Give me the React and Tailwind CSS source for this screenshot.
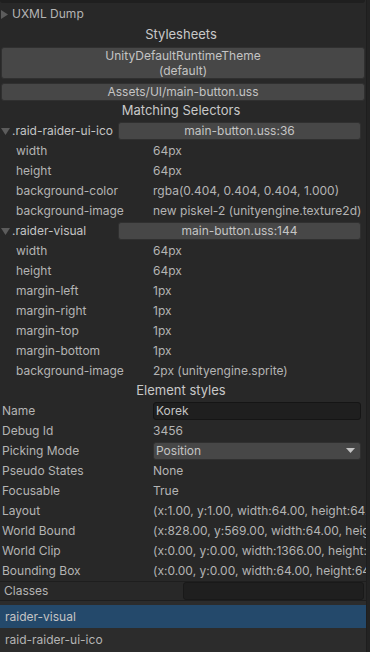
import React from 'react';

const font = { fontFamily: 'Inter, "Noto Sans", sans-serif' };

function Caret({ open }) {
  return (
    <svg width="9" height="9" viewBox="0 0 9 9" className="shrink-0">
      {open ? <path d="M0 1 L9 1 L4.5 8 Z" fill="#5c5c5c" /> : <path d="M1 0 L8 4.5 L1 9 Z" fill="#5c5c5c" />}
    </svg>
  );
}

function Header({ children }) {
  return <div className="h-5 flex items-center justify-center text-[13px] text-[#c8c8c8] pr-1">{children}</div>;
}

function PropRow({ name, value }) {
  return (
    <div className="h-5 flex items-center text-[12px] text-[#b4b4b4] whitespace-nowrap overflow-hidden">
      <div className="w-[153px] pl-4 shrink-0">{name}</div>
      <div className="overflow-hidden">{value}</div>
    </div>
  );
}

function Selector({ name, file, props }) {
  return (
    <div>
      <div className="h-5 flex items-center text-[12px] text-[#c4c4c4]">
        <div className="w-[118px] flex items-center gap-[2px] pl-[1px] shrink-0">
          <Caret open />
          <span className="whitespace-nowrap">{name}</span>
        </div>
        <div className="flex-1 h-[18px] mr-[5px] rounded-[3px] bg-[#474747] border border-[#303030] flex items-center justify-center text-[#c4c4c4]">
          {file}
        </div>
      </div>
      {props.map(p => <PropRow key={p[0]} name={p[0]} value={p[1]} />)}
    </div>
  );
}

function InfoRow({ name, children }) {
  return (
    <div className="h-5 flex items-center text-[12px] text-[#b4b4b4] whitespace-nowrap overflow-hidden">
      <div className="w-[153px] pl-[2px] shrink-0">{name}</div>
      <div className="flex-1 min-w-0 overflow-hidden">{children}</div>
    </div>
  );
}

export default function App() {
  return (
    <div className="w-[370px] h-[652px] bg-[#282828] overflow-hidden flex" style={font}>
      <div className="flex-1 min-w-0 flex flex-col">
        <div className="h-[3px] mr-[1px] bg-[#1f1f1f] rounded-b-sm" />
        <div className="h-[22px] flex items-center gap-[3px] text-[12px] text-[#b4b4b4]">
          <Caret />
          <span>UXML Dump</span>
        </div>
        <Header>Stylesheets</Header>
        <div className="mt-[2px] mx-[1px] h-[32px] rounded-[3px] bg-[#474747] border border-[#303030] flex flex-col items-center justify-center text-[12px] leading-[15px] text-[#c4c4c4]">
          <span>UnityDefaultRuntimeTheme</span>
          <span>(default)</span>
        </div>
        <div className="mt-[4px] mx-[1px] h-[18px] rounded-[3px] bg-[#474747] border border-[#303030] flex items-center justify-center text-[12px] text-[#c4c4c4]">
          Assets/UI/main-button.uss
        </div>
        <Header>Matching Selectors</Header>
        <Selector
          name=".raid-raider-ui-ico"
          file="main-button.uss:36"
          props={[
            ['width', '64px'],
            ['height', '64px'],
            ['background-color', 'rgba(0.404, 0.404, 0.404, 1.000)'],
            ['background-image', 'new piskel-2 (unityengine.texture2d)'],
          ]}
        />
        <Selector
          name=".raider-visual"
          file="main-button.uss:144"
          props={[
            ['width', '64px'],
            ['height', '64px'],
            ['margin-left', '1px'],
            ['margin-right', '1px'],
            ['margin-top', '1px'],
            ['margin-bottom', '1px'],
            ['background-image', '2px (unityengine.sprite)'],
          ]}
        />
        <Header>Element styles</Header>
        <InfoRow name="Name">
          <div className="h-[18px] mr-[5px] rounded-[3px] bg-[#1f1f1f] border border-[#151515] flex items-center px-[2px] text-[#c4c4c4]">Korek</div>
        </InfoRow>
        <InfoRow name="Debug Id">3456</InfoRow>
        <InfoRow name="Picking Mode">
          <div className="h-[18px] mr-[5px] rounded-[3px] bg-[#474747] border border-[#303030] flex items-center justify-between px-[2px] text-[#c4c4c4]">
            <span>Position</span>
            <svg width="9" height="6" viewBox="0 0 9 6" className="mr-[3px]"><path d="M0 0 L9 0 L4.5 5 Z" fill="#c4c4c4" /></svg>
          </div>
        </InfoRow>
        <InfoRow name="Pseudo States">None</InfoRow>
        <InfoRow name="Focusable">True</InfoRow>
        <InfoRow name="Layout">(x:1.00, y:1.00, width:64.00, height:64.00)</InfoRow>
        <InfoRow name="World Bound">(x:828.00, y:569.00, width:64.00, height:64.00)</InfoRow>
        <InfoRow name="World Clip">(x:0.00, y:0.00, width:1366.00, height:768.00)</InfoRow>
        <InfoRow name="Bounding Box">(x:0.00, y:0.00, width:64.00, height:64.00)</InfoRow>
        <div className="h-[20px] border-y border-[#1e1e1e] flex items-center text-[12px] text-[#b4b4b4]">
          <div className="w-[183px] pl-[4px] shrink-0">Classes</div>
          <div className="flex-1 h-[18px] mr-[2px] rounded-[3px] bg-[#1f1f1f] border border-[#191919]" />
        </div>
        <div className="flex-1 bg-[#2c2c2c] pt-[4px]">
          <div className="h-[23px] bg-[#24496b] flex items-center pl-[5px] text-[12px] text-[#c4c4c4]">raider-visual</div>
          <div className="h-[23px] flex items-center pl-[5px] text-[12px] text-[#b4b4b4]">raid-raider-ui-ico</div>
        </div>
      </div>
      <div className="w-[4px] bg-[#232323] border-l border-[#1e1e1e]" />
    </div>
  );
}
